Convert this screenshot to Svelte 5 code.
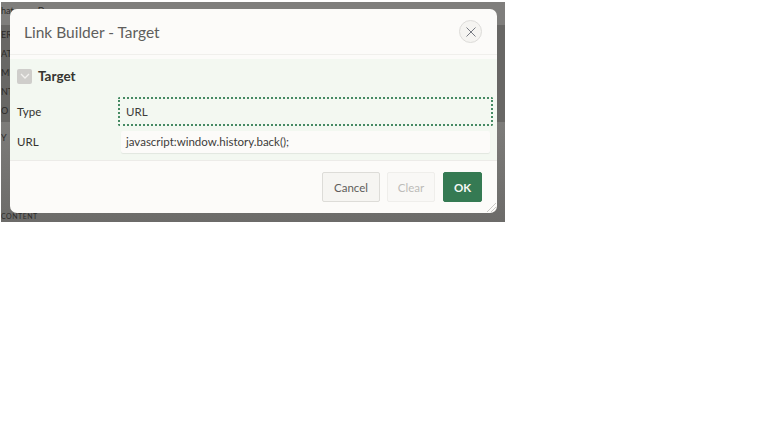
<script>
	const fields = [
		{ label: 'Type', value: 'URL', focused: true },
		{ label: 'URL', value: 'javascript:window.history.back();', focused: false }
	];
	const behind = ['ER', 'AT', 'ME', 'NT', 'O'];
</script>

<div class="page">
	<div class="backdrop">
		<div class="behind-top"><span>hat</span><span>D</span></div>
		<div class="behind-band">
			{#each behind as t}
				<span>{t}</span>
			{/each}
		</div>
		<div class="behind-rest">
			<span>Y</span>
			<span class="content">CONTENT</span>
		</div>

		<div class="dialog">
			<header class="head">
				<h1>Link Builder - Target</h1>
				<button class="close" aria-label="Close">
					<svg width="14" height="14" viewBox="0 0 14 14">
						<path d="M2.5 2.5 L11.5 11.5 M11.5 2.5 L2.5 11.5" stroke="#777a82" stroke-width="1" fill="none" />
					</svg>
				</button>
			</header>
			<div class="body">
				<div class="region">
					<span class="toggle">
						<svg width="10" height="6" viewBox="0 0 10 6">
							<path d="M1 1 L5 5 L9 1" stroke="#f2f1ee" stroke-width="1.3" fill="none" />
						</svg>
					</span>
					<h2>Target</h2>
				</div>
				{#each fields as f}
					<div class="row" class:tall={f.focused}>
						<span class="label">{f.label}</span>
						<div class="input" class:focused={f.focused}>{f.value}</div>
					</div>
				{/each}
			</div>
			<footer class="foot">
				<button class="btn">Cancel</button>
				<button class="btn off">Clear</button>
				<button class="btn ok">OK</button>
				<svg class="grip" width="9" height="9" viewBox="0 0 9 9">
					<path d="M0 9 L9 0 M4 9 L9 4 M7 9 L9 7" stroke="#c9c8c5" stroke-width="1" fill="none" />
				</svg>
			</footer>
		</div>
	</div>
</div>

<style>
	:global(body) {
		margin: 0;
		background: #fff;
		font-family: Lato, sans-serif;
	}
	.page {
		width: 768px;
		height: 431px;
		padding: 2px 0 0 1px;
		box-sizing: border-box;
	}
	.backdrop {
		position: relative;
		width: 504px;
		height: 220px;
		background: #6b6a68;
		overflow: hidden;
		font-size: 9px;
		color: #2c2b2a;
	}
	.behind-top {
		height: 23px;
		background: #7f7e7c;
		display: flex;
		gap: 24px;
		padding-top: 3px;
		box-sizing: border-box;
	}
	.behind-band {
		height: 97px;
		background: #686765;
		display: flex;
		flex-direction: column;
		box-sizing: border-box;
	}
	.behind-band span {
		height: 19px;
		line-height: 19px;
	}
	.behind-rest {
		height: 100px;
		background: linear-gradient(#7d7c7a, #6c6b69);
		display: flex;
		flex-direction: column;
		justify-content: space-between;
		padding: 10px 0 1px;
		box-sizing: border-box;
	}
	.content {
		font-size: 7px;
		letter-spacing: 0.5px;
		line-height: 9px;
	}
	.dialog {
		position: absolute;
		left: 9px;
		top: 7px;
		width: 487px;
		height: 204px;
		background: #fcfbf9;
		border-radius: 7px;
		display: flex;
		flex-direction: column;
		overflow: hidden;
	}
	.head {
		height: 45px;
		display: flex;
		align-items: center;
		justify-content: space-between;
		padding: 0 15px 0 14px;
		border-bottom: 1px solid #f0efec;
	}
	h1 {
		margin: 0;
		font-size: 15.5px;
		font-weight: 400;
		color: #5f5e5c;
	}
	.close {
		width: 23px;
		height: 23px;
		padding: 0;
		border-radius: 50%;
		border: 1px solid #dddcd9;
		background: #f5f4f1;
		display: flex;
		align-items: center;
		justify-content: center;
	}
	.body {
		background: #f3f8f1;
		height: 102px;
		padding: 3px 7px 0 7px;
		margin-top: 4px;
		box-sizing: border-box;
		border-bottom: 1px solid #ecebe8;
	}
	.region {
		display: flex;
		align-items: center;
		gap: 6px;
		height: 28px;
		margin-bottom: 7px;
	}
	.toggle {
		width: 15px;
		height: 15px;
		border-radius: 2px;
		background: #cfcecb;
		display: flex;
		align-items: center;
		justify-content: center;
	}
	h2 {
		margin: 0;
		font-size: 13.5px;
		font-weight: 700;
		color: #35342f;
	}
	.row {
		display: flex;
		align-items: center;
		height: 31px;
	}
	.row.tall {
		height: 29px;
	}
	.label {
		width: 101px;
		font-size: 11.5px;
		color: #35342f;
	}
	.input {
		flex: 1;
		height: 22px;
		line-height: 22px;
		padding: 0 5px;
		margin-left: 3px;
		font-size: 11.5px;
		color: #3d3c39;
		background: #fcfbf9;
		border-radius: 2px;
		box-shadow: 0 1px 1px rgba(0, 0, 0, 0.07);
	}
	.input.focused {
		height: 29px;
		line-height: 29px;
		margin: 0 -3px 0 0;
		padding: 0 8px;
		background: transparent;
		box-shadow: none;
		outline: 2px dotted #458a63;
		outline-offset: -2px;
	}
	.foot {
		position: relative;
		flex: 1;
		display: flex;
		align-items: center;
		justify-content: flex-end;
		gap: 7px;
		padding: 0 15px;
	}
	.btn {
		height: 30px;
		padding: 0;
		width: 58px;
		font: 400 11.5px Lato, sans-serif;
		color: #5e5d5a;
		background: #f6f5f2;
		border: 1px solid #dddcd8;
		border-radius: 2px;
	}
	.off {
		width: 48px;
		color: #bdbcb9;
		background: #f9f8f6;
		border-color: #efeeeb;
		margin-right: 1px;
	}
	.ok {
		width: 39px;
		background: #357a53;
		border-color: #357a53;
		color: #f6f8f5;
		font-weight: 700;
	}
	.grip {
		position: absolute;
		right: 1px;
		bottom: 1px;
	}
</style>
